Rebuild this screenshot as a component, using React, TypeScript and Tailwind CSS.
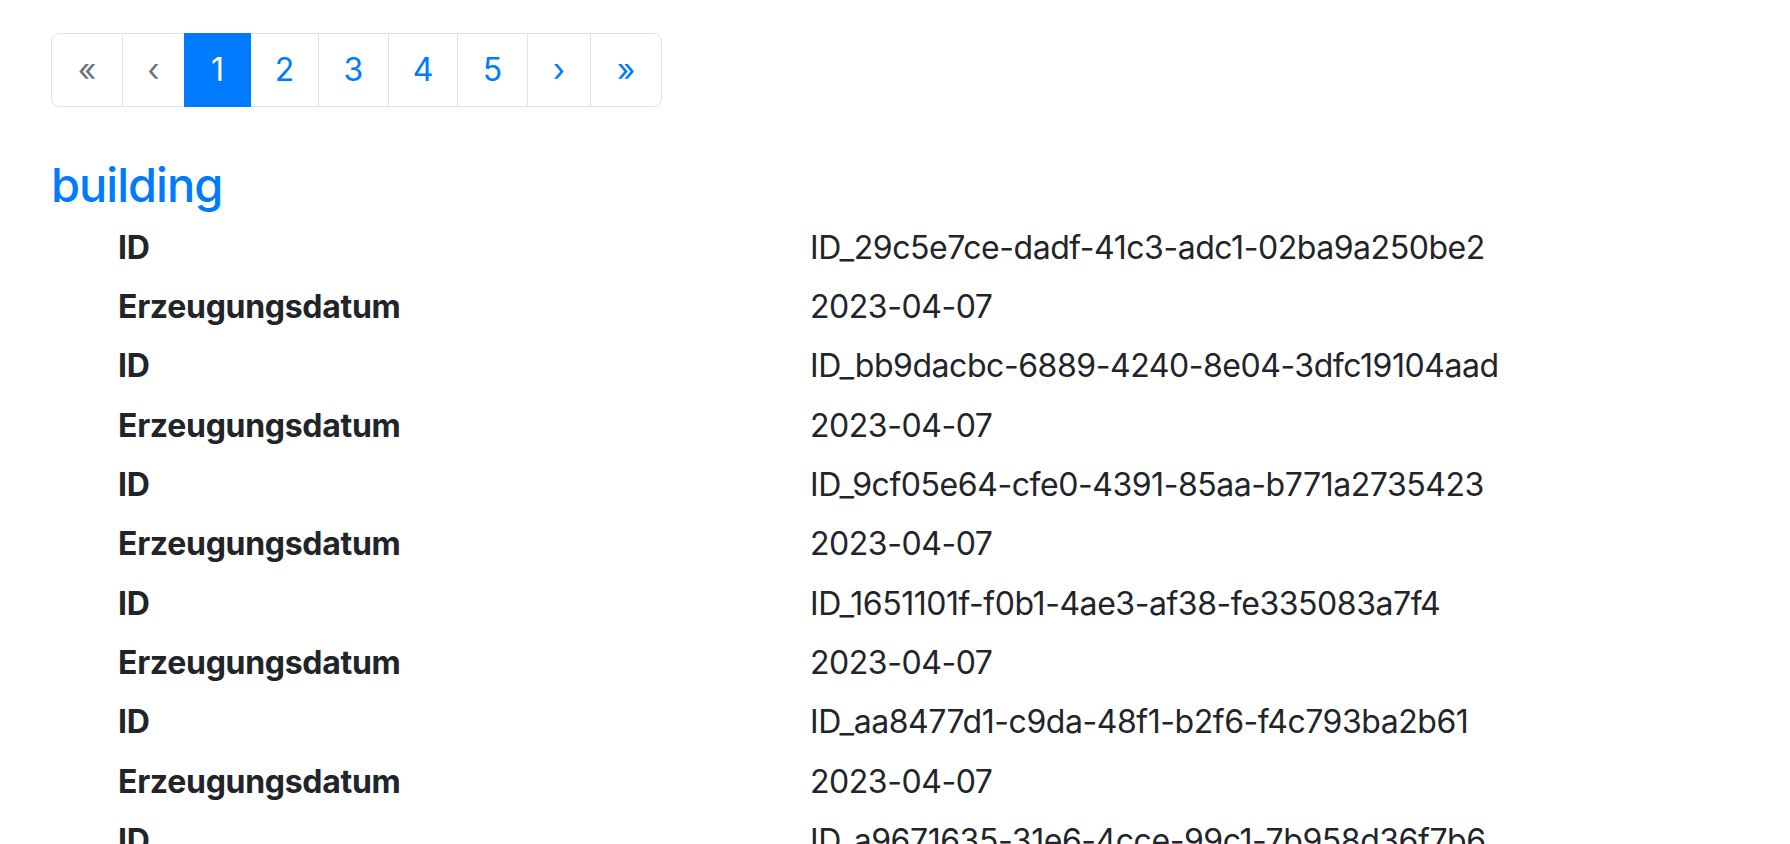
import React from 'react';

const pages = [
  { label: '«', w: 'w-[72px]', kind: 'disabled' },
  { label: '‹', w: 'w-[63px]', kind: 'disabled' },
  { label: '1', w: 'w-[67px]', kind: 'active' },
  { label: '2', w: 'w-[69px]', kind: 'link' },
  { label: '3', w: 'w-[71px]', kind: 'link' },
  { label: '4', w: 'w-[70px]', kind: 'link' },
  { label: '5', w: 'w-[71px]', kind: 'link' },
  { label: '›', w: 'w-[64px]', kind: 'link' },
  { label: '»', w: 'w-[72px]', kind: 'link' },
];

const records = [
  'ID_29c5e7ce-dadf-41c3-adc1-02ba9a250be2',
  'ID_bb9dacbc-6889-4240-8e04-3dfc19104aad',
  'ID_9cf05e64-cfe0-4391-85aa-b771a2735423',
  'ID_1651101f-f0b1-4ae3-af38-fe335083a7f4',
  'ID_aa8477d1-c9da-48f1-b2f6-f4c793ba2b61',
  'ID_a9671635-31e6-4cce-99c1-7b958d36f7b6',
];

function Pagination() {
  return (
    <ul className="flex">
      {pages.map((p, i) => {
        // active page sits on top of its neighbours' borders, like bootstrap
        let cls = 'border-[#dee2e6] bg-white text-[#007bff]';
        if (p.kind === 'active') cls = 'relative z-10 border-[#007bff] bg-[#007bff] text-white';
        if (p.kind === 'disabled') cls = 'border-[#dee2e6] bg-white text-[#6c757d]';
        return (
          <li
            key={i}
            className={`${p.w} ${cls} flex h-[74px] items-center justify-center border text-[32px] leading-[40px] ${
              i > 0 ? '-ml-px' : 'rounded-l-lg'
            } ${i === pages.length - 1 ? 'rounded-r-lg' : ''}`}
          >
            {p.label}
          </li>
        );
      })}
    </ul>
  );
}

export default function App() {
  return (
    <div className="min-h-screen overflow-hidden bg-white pl-[51px] pt-[33px] font-['Inter',sans-serif] text-[#212529]">
      <Pagination />

      <h4 className="mt-[49px] text-[47px] font-medium leading-[57.6px] tracking-[-1px] text-[#007bff]">building</h4>

      <dl className="mt-[4px] grid grid-cols-[692px_1fr] pl-[67px] text-[32px] leading-[59.36px]">
        {records.map((id) => (
          <React.Fragment key={id}>
            <dt className="font-bold tracking-[-0.3px]">ID</dt>
            <dd className="tracking-[-0.45px]">{id}</dd>
            <dt className="font-bold tracking-[-0.3px]">Erzeugungsdatum</dt>
            <dd className="tracking-[-0.45px]">2023-04-07</dd>
          </React.Fragment>
        ))}
      </dl>
    </div>
  );
}
